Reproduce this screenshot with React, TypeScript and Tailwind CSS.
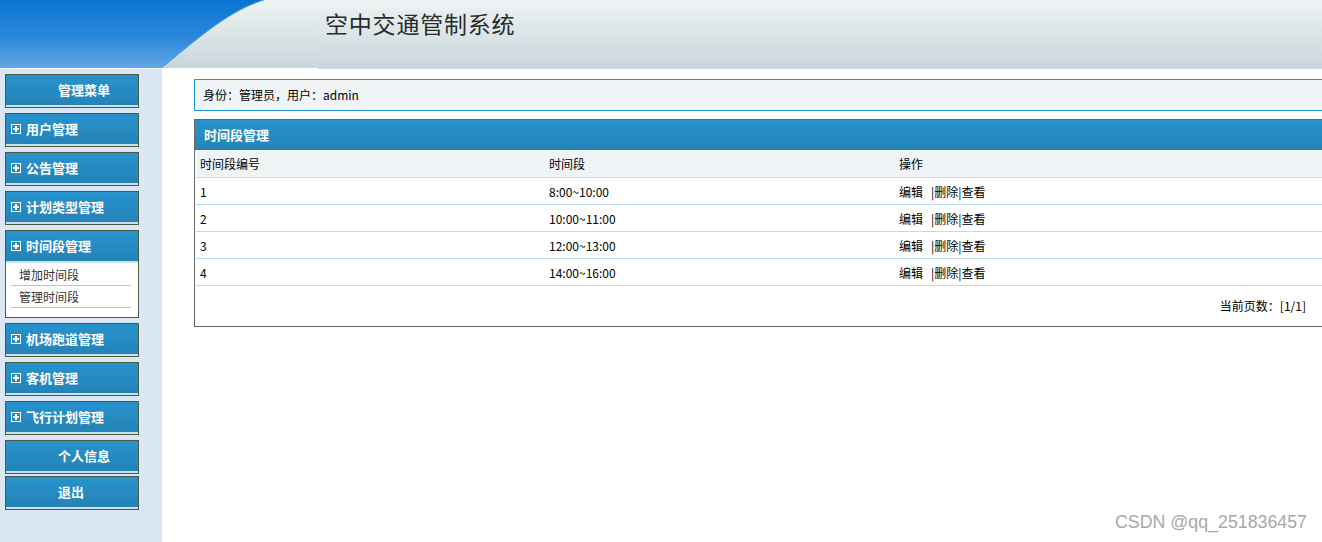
import React from 'react'

const font = { fontFamily: '"Noto Sans CJK SC", "Liberation Sans", sans-serif' }

const menus = [
  { title: '用户管理' },
  { title: '公告管理' },
  { title: '计划类型管理' },
  { title: '时间段管理', open: true, items: ['增加时间段', '管理时间段'] },
  { title: '机场跑道管理' },
  { title: '客机管理' },
  { title: '飞行计划管理' },
]

const rows = [
  { id: '1', time: '8:00~10:00' },
  { id: '2', time: '10:00~11:00' },
  { id: '3', time: '12:00~13:00' },
  { id: '4', time: '14:00~16:00' },
]

function PlusBox() {
  return (
    <svg width="10" height="10" viewBox="0 0 10 10" className="shrink-0">
      <rect x="0.5" y="0.5" width="9" height="9" fill="none" stroke="#fff" strokeWidth="1" />
      <rect x="2" y="4" width="6" height="2" fill="#fff" />
      <rect x="4" y="2" width="2" height="6" fill="#fff" />
    </svg>
  )
}

function MenuBar({ children, center }: { children: React.ReactNode; center?: boolean }) {
  return (
    <div className="flex flex-col">
      <div
        className={
          'h-[30px] flex items-center gap-[5px] bg-gradient-to-b from-[#2793ce] to-[#2583b6] text-white text-[13px] font-bold ' +
          (center ? 'pl-[52px]' : 'pl-[5px]')
        }
      >
        {children}
      </div>
      <div className="h-[2px] bg-[#c9e1ee]" />
    </div>
  )
}

function Header() {
  return (
    <div className="flex items-start h-[69px] bg-white">
      <svg width="318" height="68" viewBox="0 0 318 68" className="shrink-0 block">
        <defs>
          <linearGradient id="blue" x1="0" y1="0" x2="0" y2="1">
            <stop offset="0" stopColor="#0a74d3" />
            <stop offset="0.55" stopColor="#2a88da" />
            <stop offset="1" stopColor="#62a7e3" />
          </linearGradient>
          <linearGradient id="grey" x1="0" y1="0" x2="0" y2="1">
            <stop offset="0" stopColor="#eff3f4" />
            <stop offset="1" stopColor="#c8d6dc" />
          </linearGradient>
        </defs>
        <rect x="0" y="0" width="318" height="68" fill="url(#grey)" />
        <path d="M0 0 H264 C236 8 208 30 186 48 C176 56 168 63 161 68 H0 Z" fill="url(#blue)" />
        <path d="M264 0 C236 8 208 30 186 48 C176 56 168 63 161 68" fill="none" stroke="#4d9ee6" strokeWidth="1" />
      </svg>
      <div className="flex-1 h-[69px] bg-gradient-to-b from-[#eff3f4] to-[#c8d6dc] pl-[7px] pt-[6px]">
        <div className="text-[23px] leading-[34px] text-[#2a2a2a] tracking-[0.8px]">空中交通管制系统</div>
      </div>
    </div>
  )
}

function Sidebar() {
  return (
    <div className="w-[162px] shrink-0 bg-[#dbe7f4] pl-[5px] pt-[5px]">
      <div className="w-[134px] border border-[#4c5a3f] mb-[5px]">
        <MenuBar center>管理菜单</MenuBar>
      </div>
      {menus.map((m) => (
        <div key={m.title} className="w-[134px] border border-[#4c5a3f] mb-[5px]">
          <MenuBar>
            <PlusBox />
            <span>{m.title}</span>
          </MenuBar>
          {m.open && (
            <div className="bg-white pt-[1px] pb-[9px]">
              {m.items!.map((it) => (
                <div
                  key={it}
                  className="ml-[5px] mr-[7px] h-[22px] border-b border-[#a9cde6] pl-[8px] flex items-center text-[12px] text-[#333]"
                >
                  {it}
                </div>
              ))}
            </div>
          )}
        </div>
      ))}
      <div className="w-[134px] border border-[#4c5a3f] mb-[2px]">
        <MenuBar center>个人信息</MenuBar>
      </div>
      <div className="w-[134px] border border-[#4c5a3f]">
        <MenuBar center>退出</MenuBar>
      </div>
    </div>
  )
}

function Main() {
  return (
    <div className="flex-1 flex flex-col pl-[32px] pt-[10px]">
      <div className="w-[1132px] h-[32px] border border-[#1c9ad1] bg-[#f0f4f7] pl-[8px] flex items-center text-[12px] text-black">
        身份：管理员，用户：admin
      </div>

      <div className="w-[1132px] mt-[8px] border border-[#666]">
        <div className="h-[30px] bg-gradient-to-b from-[#2793ce] to-[#2584b7] border-b border-[#666] pl-[9px] flex items-center text-white text-[13px] font-bold">
          时间段管理
        </div>
        <div className="pt-[1px] pl-[1px]">
          <div className="grid grid-cols-[349px_350px_1fr] h-[27px] bg-[#f0f4f7] border-b border-[#bfdcee] items-center text-[12px] text-black">
            <div className="pl-[4px]">时间段编号</div>
            <div className="pl-[4px]">时间段</div>
            <div className="pl-[4px]">操作</div>
          </div>
          {rows.map((r) => (
            <div
              key={r.id}
              className="grid grid-cols-[349px_350px_1fr] h-[27px] border-b border-[#bfdcee] items-center text-[12px] text-black"
            >
              <div className="pl-[4px] pt-[1px]">{r.id}</div>
              <div className="pl-[4px] pt-[1px]">{r.time}</div>
              <div className="pl-[4px] pt-[1px] flex">
                <span>编辑</span>
                <span className="ml-[8px]">|删除|查看</span>
              </div>
            </div>
          ))}
          <div className="h-[40px] flex items-center justify-end pr-[19px] text-[12px] text-black">
            当前页数：[1/1]
          </div>
        </div>
      </div>

      <div className="flex-1" />
      <div
        className="self-end mr-[19px] mb-[6px] text-[17.8px] text-[#a8a8a8]"
        style={{ fontFamily: '"Liberation Sans", Arial, sans-serif' }}
      >
        CSDN @qq_251836457
      </div>
    </div>
  )
}

export default function App() {
  return (
    <div className="w-[1322px] h-[542px] overflow-hidden bg-white flex flex-col" style={font}>
      <Header />
      <div className="flex flex-1 min-h-0">
        <Sidebar />
        <Main />
      </div>
    </div>
  )
}
